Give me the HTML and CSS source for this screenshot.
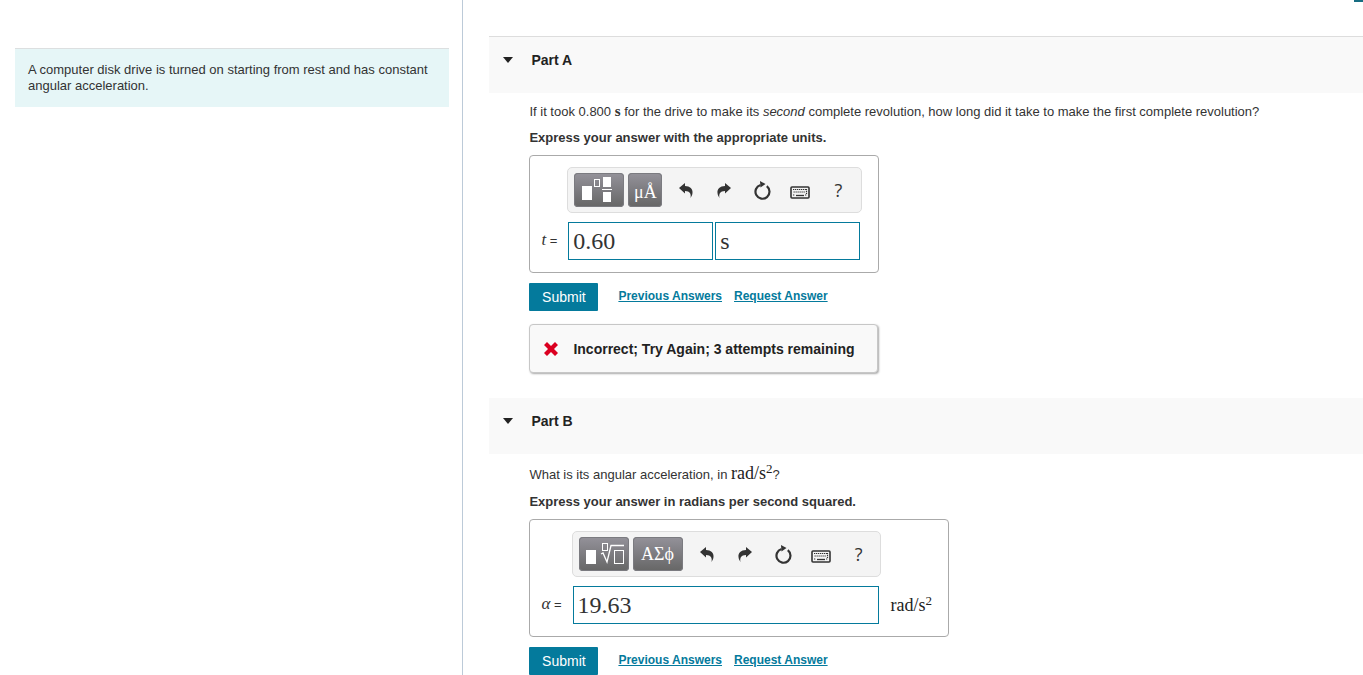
FILE: index.html
```html
<!DOCTYPE html>
<html lang="en">
<head>
<meta charset="utf-8">
<title>Angular acceleration problem</title>
<link rel="stylesheet" href="styles.css">
</head>
<body>
<svg class="sprite" aria-hidden="true">
  <symbol id="undo" viewBox="0 0 14 15"><path d="M0 5 L6 0 V3 C11 3 14 6 13.500 10 C13.300 12 12.500 13.500 11.500 15 C12.300 11 11 8 6 8 V10.500 Z"/></symbol>
  <symbol id="redo" viewBox="0 0 14 15"><path d="M14 5 L8 0 V3 C3 3 0 6 .5 10 C.7 12 1.500 13.500 2.500 15 C1.700 11 3 8 8 8 V10.500 Z"/></symbol>
  <symbol id="reset" viewBox="0 0 18 19"><path d="M13.800 5.200 A7 7 0 1 1 7.500 4" fill="none" stroke="currentColor" stroke-width="2.200"/><path d="M7 0 L12.500 3 L7.500 6.500 Z"/></symbol>
  <symbol id="keyboard" viewBox="0 0 20 13"><rect x="1" y="1" width="18" height="11" rx="1" fill="none" stroke="currentColor" stroke-width="1.600"/><path d="M3 3.500H17M3.500 6H15M3 9H5M6 9.500H14M15 9H17M16.500 3V8" fill="none" stroke="currentColor" stroke-width="1.200" stroke-dasharray="1.300 .7"/><path d="M6 9.500H14" stroke="currentColor" stroke-width="1.300"/></symbol>
</svg>
<div class="page">
  <aside class="side">
    <p class="intro">A computer disk drive is turned on starting from rest and has constant angular acceleration.</p>
  </aside>
  <main class="main">
    <div class="corner"></div>
    <section class="part">
      <header class="part-head ruled">
        <button class="toggle" type="button" aria-label="Collapse Part A"><svg viewBox="0 0 10 6"><path d="M0 0H10L5 6Z"/></svg></button>
        <h2>Part A</h2>
      </header>
      <div class="part-body">
        <p class="question">If it took 0.800 <span class="unit">s</span> for the drive to make its <em>second</em> complete revolution, how long did it take to make the first complete revolution?</p>
        <p class="instruction">Express your answer with the appropriate units.</p>
        <form class="answer">
          <label class="symbol" for="time"><i>t</i> =</label>
          <div class="entry">
            <div class="toolbar">
              <button class="tool wide" type="button" aria-label="Templates"><svg class="glyph" viewBox="0 0 50 34"><rect x="8" y="13" width="10" height="14" fill="#fff"/><rect x="20.500" y="6.500" width="5" height="7" fill="none" stroke="#fff"/><path d="M29 4h8v10h-8zM28 16h10v1H28zM29 19h8v10h-8z" fill="#fff"/></svg></button>
              <button class="tool square" type="button" aria-label="Units">μÅ</button>
              <div class="icons">
                <button class="icon" type="button" aria-label="Undo"><svg class="arrow"><use href="#undo"/></svg></button>
                <button class="icon" type="button" aria-label="Redo"><svg class="arrow"><use href="#redo"/></svg></button>
                <button class="icon" type="button" aria-label="Reset"><svg class="reset"><use href="#reset"/></svg></button>
                <button class="icon" type="button" aria-label="Keyboard shortcuts"><svg class="keyboard"><use href="#keyboard"/></svg></button>
                <button class="icon" type="button">?</button>
              </div>
            </div>
            <div class="fields">
              <input class="field" id="time" type="text" value="0.60">
              <input class="field" type="text" value="s" aria-label="Units">
            </div>
          </div>
        </form>
        <div class="actions">
          <button class="submit" type="submit">Submit</button>
          <a href="#previous">Previous Answers</a>
          <a href="#request">Request Answer</a>
        </div>
        <div class="feedback">
          <svg class="cross" viewBox="0 0 14 14"><path d="M3 0L7 4L11 0L14 3L10 7L14 11L11 14L7 10L3 14L0 11L4 7L0 3Z"/></svg>
          <span>Incorrect; Try Again; 3 attempts remaining</span>
        </div>
      </div>
    </section>
    <section class="part">
      <header class="part-head">
        <button class="toggle" type="button" aria-label="Collapse Part B"><svg viewBox="0 0 10 6"><path d="M0 0H10L5 6Z"/></svg></button>
        <h2>Part B</h2>
      </header>
      <div class="part-body">
        <p class="question tall">What is its angular acceleration, in <span class="math">rad/s<sup>2</sup></span>?</p>
        <p class="instruction">Express your answer in radians per second squared.</p>
        <form class="answer">
          <label class="symbol" for="alpha"><i>α</i> =</label>
          <div class="entry">
            <div class="toolbar">
              <button class="tool wide" type="button" aria-label="Templates"><svg class="glyph" viewBox="0 0 50 34"><rect x="7" y="13" width="10" height="14" fill="#fff"/><g fill="none" stroke="#fff"><rect x="23.500" y="6.500" width="5" height="7"/><path d="M22 17l2-1 4 9 4-16.500h13" stroke-width="1.300"/><rect x="35.500" y="13.500" width="9" height="13"/></g></svg></button>
              <button class="tool wide" type="button" aria-label="Greek letters">ΑΣϕ</button>
              <div class="icons">
                <button class="icon" type="button" aria-label="Undo"><svg class="arrow"><use href="#undo"/></svg></button>
                <button class="icon" type="button" aria-label="Redo"><svg class="arrow"><use href="#redo"/></svg></button>
                <button class="icon" type="button" aria-label="Reset"><svg class="reset"><use href="#reset"/></svg></button>
                <button class="icon" type="button" aria-label="Keyboard shortcuts"><svg class="keyboard"><use href="#keyboard"/></svg></button>
                <button class="icon" type="button">?</button>
              </div>
            </div>
            <div class="fields">
              <input class="field" id="alpha" type="text" value="19.63">
            </div>
          </div>
          <span class="math suffix">rad/s<sup>2</sup></span>
        </form>
        <div class="actions">
          <button class="submit" type="submit">Submit</button>
          <a href="#previous">Previous Answers</a>
          <a href="#request">Request Answer</a>
        </div>
      </div>
    </section>
  </main>
</div>
</body>
</html>
```
FILE: styles.css
```css
* { box-sizing: border-box; }
body {
  margin: 0;
  background: #fff;
  color: #333;
  font: 13px/16px "Liberation Sans", Arial, sans-serif;
}
p, h2 { margin: 0; }
button, input { font: inherit; color: inherit; margin: 0; }
button { border: 0; padding: 0; background: none; cursor: pointer; }
.sprite { display: none; }

.page {
  display: grid;
  grid-template-columns: 34% 1fr;
  min-height: 100vh;
}
.side {
  padding: 48px 13px 0 15px;
  border-right: 1px solid #bccad8;
}
.intro {
  padding: 13px 13px 13px;
  border-top: 1px solid #dcdfe0;
  background: #e6f6f7;
}
.main { position: relative; padding: 36px 0 0 26px; }
.corner {
  position: absolute;
  top: 0;
  right: 0;
  width: 9px;
  height: 2px;
  background: #176d82;
}
.part-head {
  display: flex;
  align-items: flex-start;
  height: 56px;
  padding: 15px 14px 0;
  background: #f9f9f9;
}
.ruled { height: 57px; border-top: 1px solid #ddd; }
.part-head h2 {
  margin-left: 18px;
  color: #222;
  font-size: 14px;
  line-height: 16px;
}
.toggle { width: 10px; height: 16px; }
.toggle svg { display: block; width: 10px; height: 6px; fill: #222; }
.part-body { padding: 11px 16px 25px 40px; }
.part:last-child .part-body { padding-bottom: 0; }
.instruction { margin: 10px 0 9px; font-weight: bold; }
.unit { font: bold 15px/1 "Liberation Serif", serif; }
.tall { line-height: 18px; }
.math { font-family: "Liberation Serif", serif; font-size: 18px; line-height: 16px; color: #222; }
.math sup { font-size: 13px; line-height: 0; vertical-align: 6px; }

.answer {
  display: flex;
  width: fit-content;
  padding: 11px 16px 12px 11px;
  border: 1px solid #aaa;
  border-radius: 4px;
}
.symbol, .suffix { align-self: flex-end; margin-bottom: 11px; }
.symbol { padding-right: 10px; white-space: nowrap; }
.symbol i { font: italic 17px/16px "Liberation Serif", serif; }
.suffix { padding-left: 10px; }
.toolbar {
  display: flex;
  gap: 4px;
  height: 46px;
  padding: 5px 2px 5px 6px;
  border: 1px solid #ddd;
  border-radius: 5px;
  background: #f4f4f4;
}
.tool {
  height: 34px;
  border-radius: 4px;
  background: linear-gradient(#94929a, #666);
  box-shadow: inset 0 0 0 1px #7b7b80;
  color: #fff;
  font: 18px/34px "Liberation Serif", serif;
}
.wide { width: 50px; }
.square { width: 34px; padding-top: 2px; }
.glyph { display: block; width: 50px; height: 34px; }
.icons { display: flex; margin-left: 1px; }
.icon {
  display: flex;
  align-items: center;
  justify-content: center;
  width: 38px;
  height: 34px;
  color: #333;
  fill: currentColor;
  font: 18px/34px "Open Sans", sans-serif;
}
.arrow { width: 14px; height: 15px; }
.reset { width: 18px; height: 19px; }
.keyboard { width: 20px; height: 13px; margin-top: 4px; }
.fields { display: flex; gap: 2px; padding: 9px 2px 0 1px; }
.field {
  flex: 1;
  width: 145px;
  height: 38px;
  padding: 0 4px;
  border: 1px solid #047a9c;
  border-radius: 0;
  background: #fff;
  font: 24px/36px "Liberation Serif", serif;
}

.actions { display: flex; gap: 12px; padding-top: 10px; }
.submit {
  width: 69px;
  height: 28px;
  margin-right: 8px;
  border-radius: 1px;
  background: #047a9c;
  color: #fff;
  font-size: 14px;
}
.actions a {
  padding-top: 5px;
  color: #047a9c;
  font-size: 12px;
  font-weight: bold;
}
.feedback {
  display: flex;
  align-items: center;
  gap: 15px;
  width: fit-content;
  min-width: 349px;
  height: 49px;
  margin-top: 13px;
  padding: 0 14px;
  border: 1px solid #c7c7c7;
  border-radius: 4px;
  background: #f9f9f9;
  box-shadow: 1px 1px 2px #aaa;
  color: #222;
  font-size: 14px;
  font-weight: bold;
}
.cross { width: 14px; height: 14px; fill: #db0020; }
```
